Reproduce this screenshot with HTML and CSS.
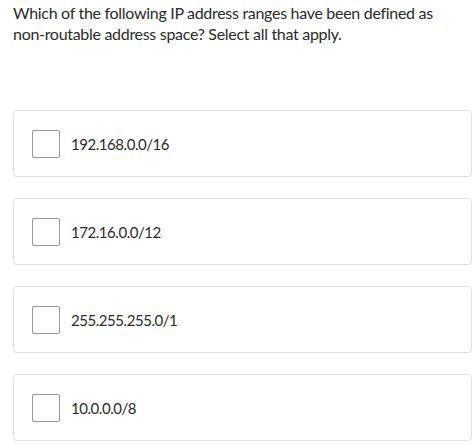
FILE: index.html
```html
<!DOCTYPE html>
<html>
<head>
<meta charset="utf-8">
<link rel="stylesheet" href="styles.css">
</head>
<body>
<div class="page">
  <p class="question">Which of the following IP address ranges have been defined as<br>non-routable address space? Select all that apply.</p>
  <div class="options">
    <label class="option"><span class="box"></span><span class="label">192.168.0.0/16</span></label>
    <label class="option"><span class="box"></span><span class="label">172.16.0.0/12</span></label>
    <label class="option"><span class="box"></span><span class="label">255.255.255.0/1</span></label>
    <label class="option"><span class="box"></span><span class="label">10.0.0.0/8</span></label>
  </div>
</div>
</body>
</html>
```
FILE: styles.css
```css
html, body { margin: 0; padding: 0; background: #fff; }
.page {
  padding: 0 2px 0 13px;
  font-family: Lato, "Liberation Sans", sans-serif;
  color: #2b2b2b;
}
.question {
  margin: 0;
  padding-top: 2px;
  font-size: 16px;
  letter-spacing: -0.3px;
  line-height: 21px;
  white-space: nowrap;
}
.options {
  display: flex;
  flex-direction: column;
  gap: 21px;
  margin-top: 66px;
}
.option {
  display: flex;
  align-items: center;
  height: 65px;
  border: 1px solid #e2e2e2;
  border-radius: 4px;
  padding-left: 18px;
}
.box {
  width: 26px;
  height: 26px;
  border: 1.5px solid #9a9a9a;
  border-radius: 2px;
  flex: none;
}
.label {
  margin-left: 11px;
  font-size: 15px;
  letter-spacing: -0.45px;
  color: #2b2b2b;
}
```
